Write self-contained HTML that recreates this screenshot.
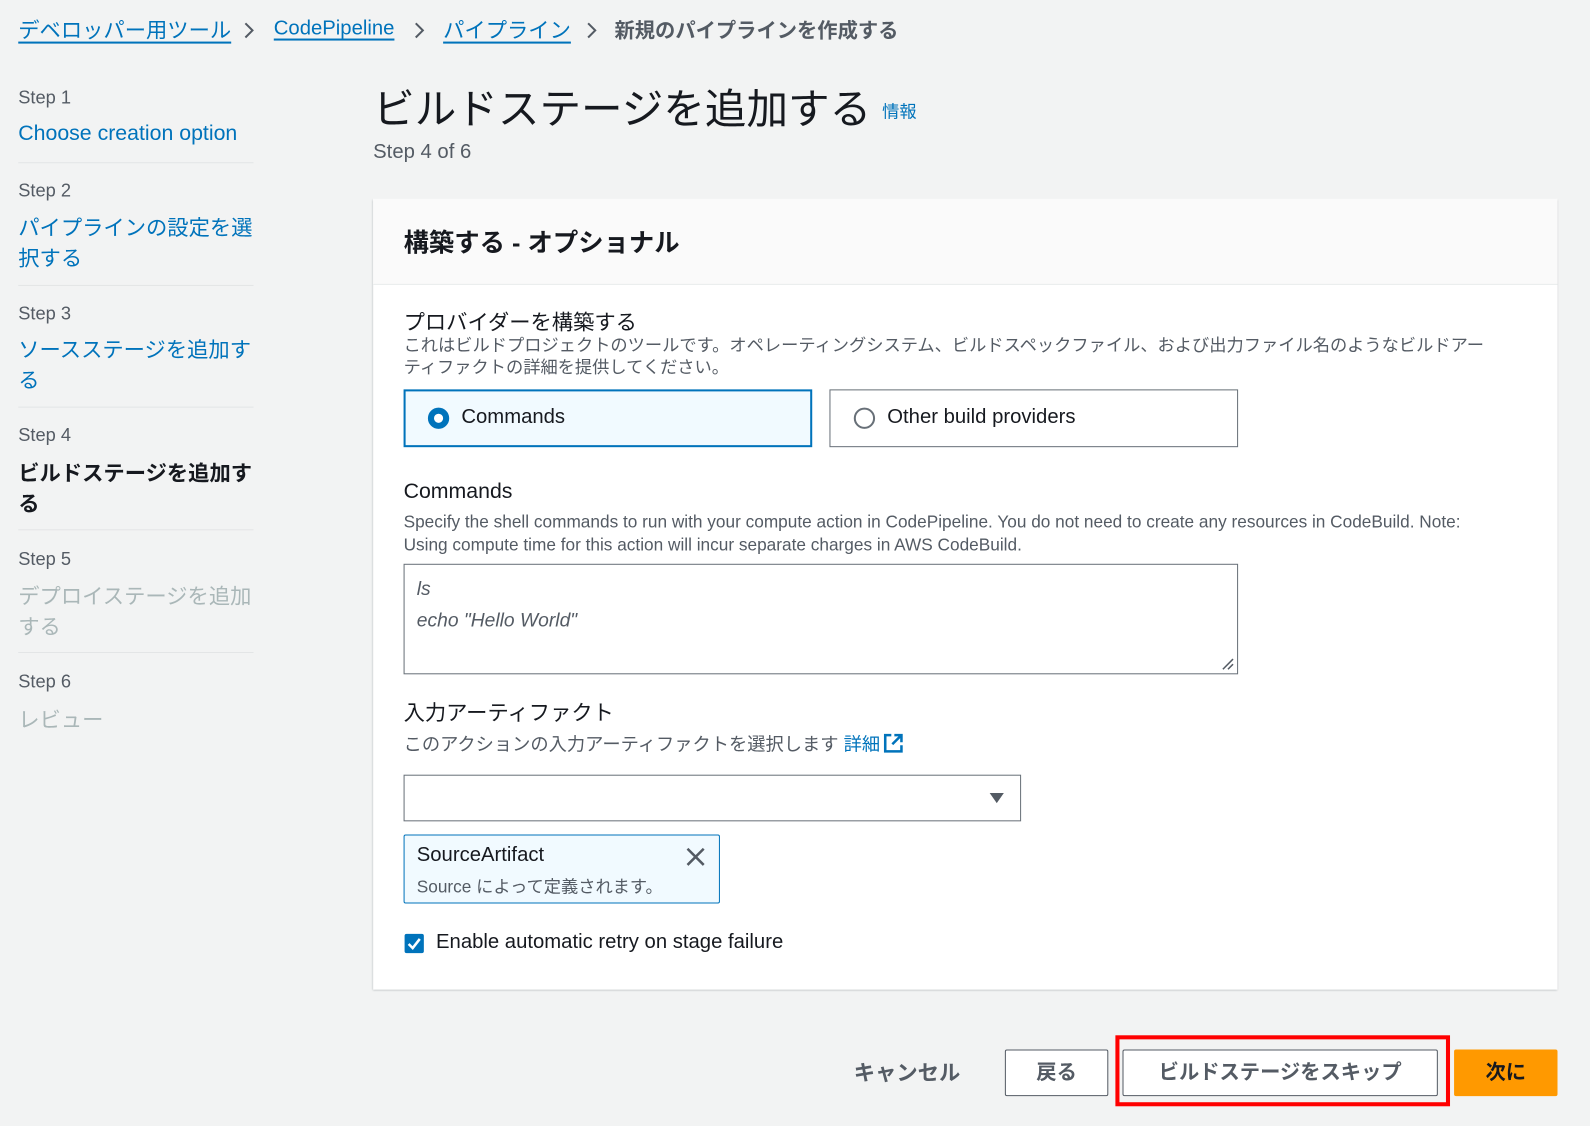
<!DOCTYPE html><html><head><meta charset="utf-8"><style>
body{margin:0;width:1590px;height:1125px;background:#f2f3f3;font-family:"Liberation Sans","Noto Sans CJK JP",sans-serif;color:#16191f;overflow:hidden}
#w{position:absolute;left:0;top:0;width:1568px;height:1110px;transform:scale(1.014);transform-origin:0 0}
.a{position:absolute;white-space:nowrap}
.lnk{color:#0073bb}
.u{text-decoration:underline;text-underline-offset:4px}
.g{color:#545b64}
.sep{position:absolute;left:18px;width:232px;height:1px;background:#e3e5e6}
.box{position:absolute;box-sizing:border-box}
</style></head><body><div id="w">
<div class="a lnk u" style="left:18px;top:14px;font-size:21px">デベロッパー用ツール</div>
<svg class="a" style="left:240px;top:21px" width="12" height="18"><path d="M2 2L9 9L2 16" fill="none" stroke="#545b64" stroke-width="2"/></svg>
<div class="a lnk u" style="left:270px;top:17px;font-size:20px">CodePipeline</div>
<svg class="a" style="left:408px;top:21px" width="12" height="18"><path d="M2 2L9 9L2 16" fill="none" stroke="#545b64" stroke-width="2"/></svg>
<div class="a lnk u" style="left:437px;top:14px;font-size:21px">パイプライン</div>
<svg class="a" style="left:578px;top:21px" width="12" height="18"><path d="M2 2L9 9L2 16" fill="none" stroke="#545b64" stroke-width="2"/></svg>
<div class="a g" style="left:606px;top:14px;font-size:20px;font-weight:bold">新規のパイプラインを作成する</div>

<div class="a g" style="left:18px;top:86px;font-size:18px">Step 1</div>
<div class="a lnk" style="left:18px;top:120px;font-size:21px">Choose creation option</div>
<div class="sep" style="top:160px"></div>
<div class="a g" style="left:18px;top:178px;font-size:18px">Step 2</div>
<div class="a lnk" style="left:18px;top:211px;font-size:21px;line-height:30px">パイプラインの設定を選<br>択する</div>
<div class="sep" style="top:281px"></div>
<div class="a g" style="left:18px;top:299px;font-size:18px">Step 3</div>
<div class="a lnk" style="left:18px;top:331px;font-size:21px;line-height:30px">ソースステージを追加す<br>る</div>
<div class="sep" style="top:401px"></div>
<div class="a g" style="left:18px;top:419px;font-size:18px">Step 4</div>
<div class="a" style="left:18px;top:453px;font-size:21px;line-height:30px;font-weight:bold">ビルドステージを追加す<br>る</div>
<div class="sep" style="top:522px"></div>
<div class="a g" style="left:18px;top:541px;font-size:18px">Step 5</div>
<div class="a" style="left:18px;top:574px;font-size:21px;line-height:30px;color:#aab7b8">デプロイステージを追加<br>する</div>
<div class="sep" style="top:643px"></div>
<div class="a g" style="left:18px;top:662px;font-size:18px">Step 6</div>
<div class="a" style="left:18px;top:694px;font-size:21px;color:#aab7b8">レビュー</div>

<div class="a" style="left:368px;top:74px;font-size:41px">ビルドステージを追加する</div>
<div class="a lnk" style="left:870px;top:96px;font-size:17px">情報</div>
<div class="a g" style="left:368px;top:139px;font-size:20px">Step 4 of 6</div>

<div class="box" style="left:368px;top:196px;width:1168px;height:780px;background:#fff;box-shadow:0 1px 2px rgba(0,28,36,.3)"></div>
<div class="box" style="left:368px;top:196px;width:1168px;height:85px;background:#fafafa;border-bottom:1px solid #eaeded"></div>
<div class="a" style="left:398px;top:220px;font-size:25px;font-weight:bold">構築する - オプショナル</div>

<div class="a" style="left:398px;top:302px;font-size:21px">プロバイダーを構築する</div>
<div class="a g" style="left:398px;top:330px;font-size:17px;line-height:22px">これはビルドプロジェクトのツールです。オペレーティングシステム、ビルドスペックファイル、および出力ファイル名のようなビルドアー<br>ティファクトの詳細を提供してください。</div>
<div class="box" style="left:398px;top:384px;width:403px;height:57px;border:2px solid #0073bb;background:#f1faff"></div>
<div class="box" style="left:422px;top:402px;width:21px;height:21px;border-radius:50%;border:6px solid #0073bb;background:#fff"></div>
<div class="a" style="left:455px;top:400px;font-size:20px">Commands</div>
<div class="box" style="left:818px;top:384px;width:403px;height:57px;border:1px solid #687078;background:#fff"></div>
<div class="box" style="left:842px;top:402px;width:21px;height:21px;border-radius:50%;border:2px solid #687078"></div>
<div class="a" style="left:875px;top:400px;font-size:20px">Other build providers</div>

<div class="a" style="left:398px;top:473px;font-size:21px">Commands</div>
<div class="a g" style="left:398px;top:503px;font-size:17px;line-height:23px">Specify the shell commands to run with your compute action in CodePipeline. You do not need to create any resources in CodeBuild. Note:<br>Using compute time for this action will incur separate charges in AWS CodeBuild.</div>
<div class="box" style="left:398px;top:556px;width:823px;height:109px;border:1px solid #687078;background:#fff"></div>
<div class="a g" style="left:411px;top:566px;font-size:19px;font-style:italic;line-height:31px">ls<br>echo "Hello World"</div>
<svg class="a" style="left:1204px;top:648px" width="14" height="14"><path d="M2 12L12 2M7 12L12 7" stroke="#545b64" stroke-width="1.5"/></svg>

<div class="a" style="left:398px;top:687px;font-size:21px">入力アーティファクト</div>
<div class="a g" style="left:398px;top:720px;font-size:18px">このアクションの入力アーティファクトを選択します <span class="lnk">詳細</span></div>
<svg class="a" style="left:870px;top:722px" width="22" height="22"><path d="M9 3H3V19H19V13" fill="none" stroke="#0073bb" stroke-width="2.5"/><path d="M12 3H19V10M19 3L10 12" fill="none" stroke="#0073bb" stroke-width="2.5"/></svg>
<div class="box" style="left:398px;top:764px;width:609px;height:46px;border:1px solid #687078;background:#fff"></div>
<svg class="a" style="left:975px;top:781px" width="16" height="12"><path d="M1 1H15L8 11Z" fill="#545b64"/></svg>
<div class="box" style="left:398px;top:823px;width:312px;height:68px;border:1px solid #0073bb;background:#f1faff;border-radius:2px"></div>
<div class="a" style="left:411px;top:832px;font-size:20px">SourceArtifact</div>
<div class="a g" style="left:411px;top:860px;font-size:17px">Source によって定義されます。</div>
<svg class="a" style="left:676px;top:835px" width="20" height="20"><path d="M2 2L18 18M18 2L2 18" stroke="#545b64" stroke-width="2.5"/></svg>
<div class="box" style="left:399px;top:921px;width:19px;height:19px;background:#0073bb;border-radius:2px"></div>
<svg class="a" style="left:399px;top:921px" width="19" height="19"><path d="M4 10L8 14L15 5" fill="none" stroke="#fff" stroke-width="2.5"/></svg>
<div class="a" style="left:430px;top:918px;font-size:20px">Enable automatic retry on stage failure</div>

<div class="a g" style="left:842px;top:1042px;font-size:21px;font-weight:bold">キャンセル</div>
<div class="box" style="left:991px;top:1035px;width:102px;height:46px;border:1px solid #545b64;background:#fff;border-radius:2px;font-size:20px;font-weight:bold;color:#545b64;text-align:center;line-height:44px">戻る</div>
<div class="box" style="left:1100px;top:1021px;width:330px;height:70px;border:4px solid #ff0000"></div>
<div class="box" style="left:1107px;top:1035px;width:311px;height:46px;border:1px solid #545b64;background:#fff;border-radius:2px;font-size:20px;font-weight:bold;color:#545b64;text-align:center;line-height:44px">ビルドステージをスキップ</div>
<div class="box" style="left:1434px;top:1035px;width:102px;height:46px;background:#ff9900;border-radius:2px;font-size:20px;font-weight:bold;text-align:center;line-height:46px">次に</div>
</div></body></html>
